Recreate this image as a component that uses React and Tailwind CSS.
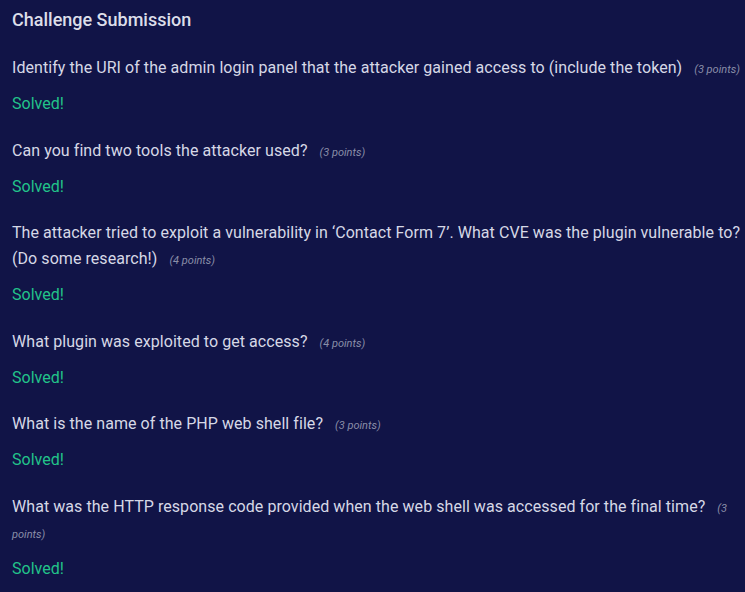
import React from "react";

const items = [
  { q: "Identify the URI of the admin login panel that the attacker gained access to (include the token)", p: 3 },
  { q: "Can you find two tools the attacker used?", p: 3 },
  { q: "The attacker tried to exploit a vulnerability in \u2018Contact Form 7\u2019. What CVE was the plugin vulnerable to? (Do some research!)", p: 4 },
  { q: "What plugin was exploited to get access?", p: 4 },
  { q: "What is the name of the PHP web shell file?", p: 3 },
  { q: "What was the HTTP response code provided when the web shell was accessed for the final time?", p: 3 },
];

export default function App() {
  return (
    <div className="min-h-[592px] w-[745px] bg-[#111447] pl-3 pt-2 font-['Roboto',sans-serif]">
      <h2 className="text-[18px] font-medium leading-6 text-[#dcdee9]">Challenge Submission</h2>
      <div className="mt-[23px] flex flex-col gap-[22.5px]">
        {items.map((it, i) => (
          <div key={i}>
            <p className="text-[16px] leading-[26px] tracking-[0.06px] text-[#d6d8e6]">
              {it.q}
              <span className="ml-[12px] text-[11px] leading-none tracking-normal italic text-[#8a8ea8]">({it.p} points)</span>
            </p>
            <p className="mt-[12px] text-[16px] leading-[22px] text-[#22c38a]">Solved!</p>
          </div>
        ))}
      </div>
    </div>
  );
}
